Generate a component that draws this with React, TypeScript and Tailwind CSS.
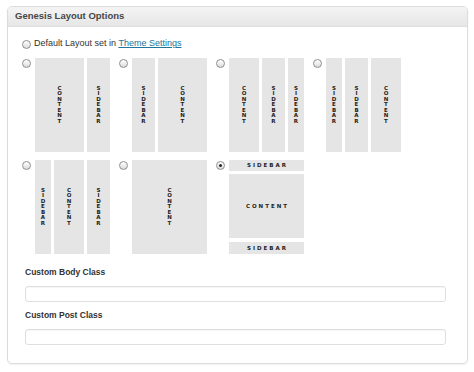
import type { ReactNode } from "react";

type Col = { label: "CONTENT" | "SIDEBAR"; w: string };

//* column layouts, widths read off the screenshot
const layouts: Col[][] = [
  [
    { label: "CONTENT", w: "w-[49px]" },
    { label: "SIDEBAR", w: "w-[23px]" },
  ],
  [
    { label: "SIDEBAR", w: "w-[23px]" },
    { label: "CONTENT", w: "w-[49px]" },
  ],
  [
    { label: "CONTENT", w: "w-[30px]" },
    { label: "SIDEBAR", w: "w-[23px]" },
    { label: "SIDEBAR", w: "w-[16px]" },
  ],
  [
    { label: "SIDEBAR", w: "w-[16px]" },
    { label: "SIDEBAR", w: "w-[23px]" },
    { label: "CONTENT", w: "w-[30px]" },
  ],
  [
    { label: "SIDEBAR", w: "w-[16px]" },
    { label: "CONTENT", w: "w-[30px]" },
    { label: "SIDEBAR", w: "w-[23px]" },
  ],
  [{ label: "CONTENT", w: "w-[75px]" }],
];

const Radio = ({ checked = false }: { checked?: boolean }) => (
  <span className="flex h-[9px] w-[9px] shrink-0 items-center justify-center rounded-full border border-[#8f8f8f] bg-gradient-to-b from-white to-[#dcdcdc]">
    {checked && <span className="h-[3px] w-[3px] rounded-full bg-[#2a2a2a]" />}
  </span>
);

const Stack = ({ text }: { text: string }) => (
  <div className="flex flex-col items-center font-['DejaVu_Sans',sans-serif] text-[5.5px] font-bold leading-[5.4px] text-[#222]">
    {text.split("").map((ch, i) => (
      <span key={i}>{ch}</span>
    ))}
  </div>
);

const Option = ({ checked, children }: { checked?: boolean; children: ReactNode }) => (
  <div className="flex gap-[4px]">
    <div className="pt-[1px]">
      <Radio checked={checked} />
    </div>
    <div className="flex h-[94px] w-[75px] gap-[3px]">{children}</div>
  </div>
);

const Field = ({ label }: { label: string }) => (
  <div className="pl-[3px]">
    <div className="h-[12px] text-[8.5px] font-bold leading-[12px] text-[#333]">{label}</div>
    <div className="mt-[8px] h-[16px] w-[421px] rounded-[3px] border border-[#dfdfdf] bg-white shadow-[inset_0_1px_1px_rgba(0,0,0,0.04)]" />
  </div>
);

export default function App() {
  return (
    <div className="h-[372px] w-[474px] bg-white pl-[7px] pt-[6px] font-['Liberation_Sans',Arial,sans-serif]">
      <div className="w-[461px] overflow-hidden rounded-[5px] border border-[#dcdcdc] bg-white shadow-[0_1px_2px_rgba(0,0,0,0.06)]">
        {/* header */}
        <div className="flex h-[20px] items-center border-b border-[#dfdfdf] bg-gradient-to-b from-[#f4f4f4] to-[#e6e6e6] px-[7px] text-[9.5px] font-bold text-[#464646]">
          Genesis Layout Options
        </div>

        <div className="px-[14px] pb-[18px]">
          {/* default layout */}
          <div className="mt-[12px] flex h-[10px] items-center gap-[3px] text-[9px] text-[#333]">
            <Radio />
            <span>
              Default Layout set in{" "}
              <span className="text-[#21759b] underline">Theme Settings</span>
            </span>
          </div>

          {/* layout choices */}
          <div className="mt-[9px] grid grid-cols-[repeat(4,88px)] gap-x-[9px] gap-y-[8px]">
            {layouts.map((cols, i) => (
              <Option key={i}>
                {cols.map((c, j) => (
                  <div key={j} className={`flex h-full items-center justify-center bg-[#e5e5e5] ${c.w}`}>
                    <Stack text={c.label} />
                  </div>
                ))}
              </Option>
            ))}
            <Option checked>
              <div className="flex w-[75px] flex-col gap-[3px] font-['DejaVu_Sans',sans-serif] text-[5.5px] font-bold tracking-[2px] text-[#222]">
                <div className="flex h-[11px] items-center justify-center bg-[#e5e5e5] pl-[2px]">SIDEBAR</div>
                <div className="flex h-[64px] items-center justify-center bg-[#e5e5e5] pl-[2px]">CONTENT</div>
                <div className="mt-[1px] flex h-[12px] items-center justify-center bg-[#e5e5e5] pl-[2px]">SIDEBAR</div>
              </div>
            </Option>
          </div>

          {/* custom classes */}
          <div className="mt-[12px] flex flex-col gap-[7px]">
            <Field label="Custom Body Class" />
            <Field label="Custom Post Class" />
          </div>
        </div>
      </div>
    </div>
  );
}
